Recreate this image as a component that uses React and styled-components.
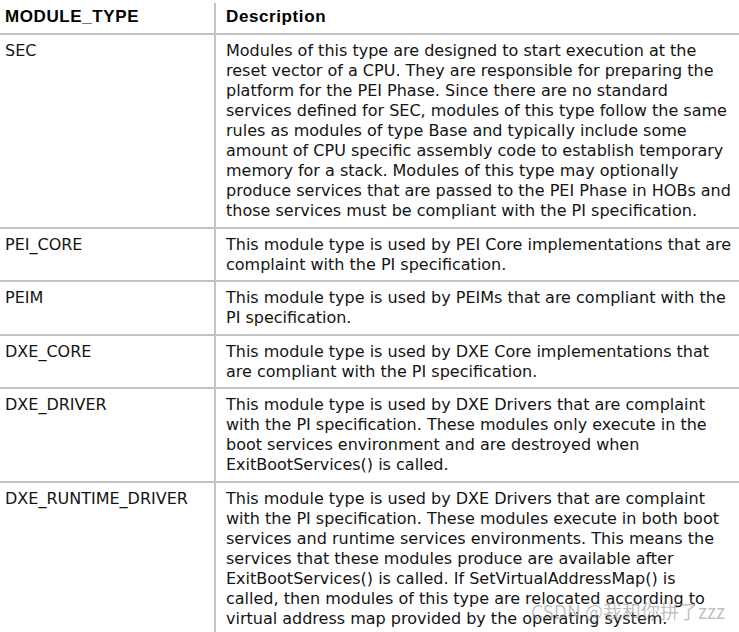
import React from "react";
import styled, { createGlobalStyle } from "styled-components";

const Global = createGlobalStyle`
  html, body { margin: 0; padding: 0; background: #ffffff; }
  body { overflow: hidden; }
`;

const Page = styled.div`
  position: relative;
  width: 739px;
  padding-top: 3px;
  font-family: "DejaVu Sans", Verdana, sans-serif;
  color: #141414;
`;

const Table = styled.div`
  display: grid;
  grid-template-columns: 216px 1fr;
`;

const Cell = styled.div`
  border-bottom: 2px solid #c3c3c3;
  border-right: ${(p) => (p.$first ? "2px solid #c3c3c3" : "none")};
  padding: ${(p) => (p.$header ? "4px 0 6px" : "6px 0 5.5px")};
  padding-left: ${(p) => (p.$first ? "5px" : "10px")};
  font-size: 16px;
  line-height: 20px;
  white-space: nowrap;
  overflow: hidden;
`;

const HeaderText = styled.span`
  font-family: "Liberation Sans", Arial, sans-serif;
  font-weight: bold;
  font-size: 17px;
  letter-spacing: 0.6px;
  color: #000;
`;

const Line = styled.div`
  display: block;
`;

const Watermark = styled.div`
  position: absolute;
  top: 600px;
  right: 14px;
  font-family: "Noto Sans CJK SC", "Noto Sans", sans-serif;
  font-size: 19px;
  line-height: 22px;
  color: rgba(140, 140, 140, 0.55);
  white-space: nowrap;
  pointer-events: none;
`;

const rows = [
  {
    type: "SEC",
    lines: [
      "Modules of this type are designed to start execution at the",
      "reset vector of a CPU. They are responsible for preparing the",
      "platform for the PEI Phase. Since there are no standard",
      "services defined for SEC, modules of this type follow the same",
      "rules as modules of type Base and typically include some",
      "amount of CPU specific assembly code to establish temporary",
      "memory for a stack. Modules of this type may optionally",
      "produce services that are passed to the PEI Phase in HOBs and",
      "those services must be compliant with the PI specification.",
    ],
  },
  {
    type: "PEI_CORE",
    lines: [
      "This module type is used by PEI Core implementations that are",
      "complaint with the PI specification.",
    ],
  },
  {
    type: "PEIM",
    lines: [
      "This module type is used by PEIMs that are compliant with the",
      "PI specification.",
    ],
  },
  {
    type: "DXE_CORE",
    lines: [
      "This module type is used by DXE Core implementations that",
      "are compliant with the PI specification.",
    ],
  },
  {
    type: "DXE_DRIVER",
    lines: [
      "This module type is used by DXE Drivers that are complaint",
      "with the PI specification. These modules only execute in the",
      "boot services environment and are destroyed when",
      "ExitBootServices() is called.",
    ],
  },
  {
    type: "DXE_RUNTIME_DRIVER",
    lines: [
      "This module type is used by DXE Drivers that are complaint",
      "with the PI specification. These modules execute in both boot",
      "services and runtime services environments. This means the",
      "services that these modules produce are available after",
      "ExitBootServices() is called. If SetVirtualAddressMap() is",
      "called, then modules of this type are relocated according to",
      "virtual address map provided by the operating system.",
    ],
  },
];

export default function App() {
  return (
    <>
      <Global />
      <Page>
        <Table>
          <Cell $first $header>
            <HeaderText>MODULE_TYPE</HeaderText>
          </Cell>
          <Cell $header>
            <HeaderText>Description</HeaderText>
          </Cell>
          {rows.map((r) => (
            <React.Fragment key={r.type}>
              <Cell $first>{r.type}</Cell>
              <Cell>
                {r.lines.map((l, i) => (
                  <Line key={i}>{l}</Line>
                ))}
              </Cell>
            </React.Fragment>
          ))}
        </Table>
        <Watermark>CSDN @我和你拼了zzz</Watermark>
      </Page>
    </>
  );
}
